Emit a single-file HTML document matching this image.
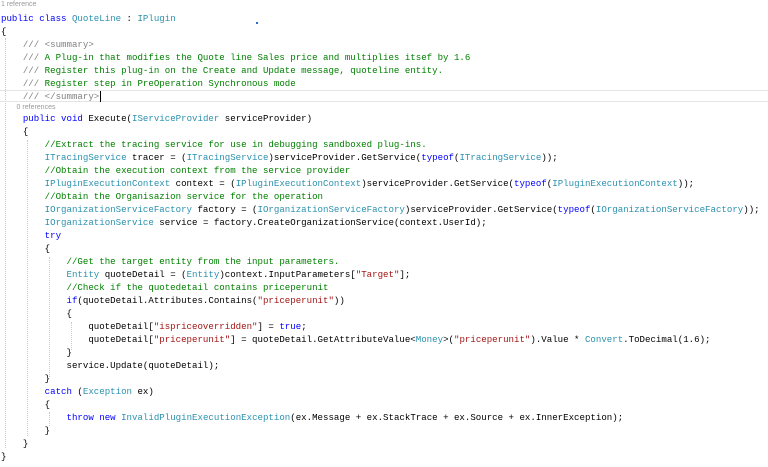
<!DOCTYPE html>
<html><head><meta charset="utf-8"><style>
html,body{margin:0;padding:0;background:#fff;width:768px;height:467px;overflow:hidden}
#c{position:absolute;left:1px;top:0;font-family:"Liberation Mono",monospace;font-size:9.1px;color:#000}
.l{height:13px;line-height:13px;white-space:pre}
.lens{height:10px;line-height:10px;font-family:"Liberation Sans",sans-serif;font-size:7px;color:#999;white-space:pre}
.k{color:#0000ff}.t{color:#2b91af}.c{color:#008000}.s{color:#a31515}.d{color:#808080}
.g{position:absolute;border-left:1px dotted #c8c8c8;width:0}
</style></head><body>
<div class="g" style="left:5px;top:38px;height:410px"></div>
<div class="g" style="left:27px;top:140px;height:296px"></div>
<div class="g" style="left:49px;top:257px;height:120px"></div>
<div class="g" style="left:49px;top:412px;height:14px"></div>
<div class="g" style="left:71px;top:322px;height:28px"></div>
<div style="position:absolute;left:0;top:90px;width:768px;height:10px;border-top:1px solid #e4e4e4;border-bottom:1px solid #e4e4e4"></div>
<div style="position:absolute;left:100px;top:91px;width:1px;height:11px;background:#000"></div>
<div style="position:absolute;left:256px;top:22px;width:2px;height:2px;background:#2b6fd6"></div>
<div id="c"><div class="lens" style="height:11.8px">1 reference</div><div class="l"><span class="k">public class</span> <span class="t">QuoteLine</span> : <span class="t">IPlugin</span></div><div class="l">{</div><div class="l">    <span class="d">/// &lt;summary&gt;</span></div><div class="l">    <span class="d">///</span><span class="c"> A Plug-in that modifies the Quote line Sales price and multiplies itsef by 1.6</span></div><div class="l">    <span class="d">///</span><span class="c"> Register this plug-in on the Create and Update message, quoteline entity.</span></div><div class="l">    <span class="d">///</span><span class="c"> Register step in PreOperation Synchronous mode</span></div><div class="l">    <span class="d">/// &lt;/summary&gt;</span></div><div class="lens" style="height:9.6px;line-height:9.6px">        0 references</div><div class="l">    <span class="k">public void</span> Execute(<span class="t">IServiceProvider</span> serviceProvider)</div><div class="l">    {</div><div class="l">        <span class="c">//Extract the tracing service for use in debugging sandboxed plug-ins.</span></div><div class="l">        <span class="t">ITracingService</span> tracer = (<span class="t">ITracingService</span>)serviceProvider.GetService(<span class="k">typeof</span>(<span class="t">ITracingService</span>));</div><div class="l">        <span class="c">//Obtain the execution context from the service provider</span></div><div class="l">        <span class="t">IPluginExecutionContext</span> context = (<span class="t">IPluginExecutionContext</span>)serviceProvider.GetService(<span class="k">typeof</span>(<span class="t">IPluginExecutionContext</span>));</div><div class="l">        <span class="c">//Obtain the Organisazion service for the operation</span></div><div class="l">        <span class="t">IOrganizationServiceFactory</span> factory = (<span class="t">IOrganizationServiceFactory</span>)serviceProvider.GetService(<span class="k">typeof</span>(<span class="t">IOrganizationServiceFactory</span>));</div><div class="l">        <span class="t">IOrganizationService</span> service = factory.CreateOrganizationService(context.UserId);</div><div class="l">        <span class="k">try</span></div><div class="l">        {</div><div class="l">            <span class="c">//Get the target entity from the input parameters.</span></div><div class="l">            <span class="t">Entity</span> quoteDetail = (<span class="t">Entity</span>)context.InputParameters[<span class="s">"Target"</span>];</div><div class="l">            <span class="c">//Check if the quotedetail contains priceperunit</span></div><div class="l">            <span class="k">if</span>(quoteDetail.Attributes.Contains(<span class="s">"priceperunit"</span>))</div><div class="l">            {</div><div class="l">                quoteDetail[<span class="s">"ispriceoverridden"</span>] = <span class="k">true</span>;</div><div class="l">                quoteDetail[<span class="s">"priceperunit"</span>] = quoteDetail.GetAttributeValue&lt;<span class="t">Money</span>&gt;(<span class="s">"priceperunit"</span>).Value * <span class="t">Convert</span>.ToDecimal(1.6);</div><div class="l">            }</div><div class="l">            service.Update(quoteDetail);</div><div class="l">        }</div><div class="l">        <span class="k">catch</span> (<span class="t">Exception</span> ex)</div><div class="l">        {</div><div class="l">            <span class="k">throw new</span> <span class="t">InvalidPluginExecutionException</span>(ex.Message + ex.StackTrace + ex.Source + ex.InnerException);</div><div class="l">        }</div><div class="l">    }</div><div class="l">}</div></div>
</body></html>
